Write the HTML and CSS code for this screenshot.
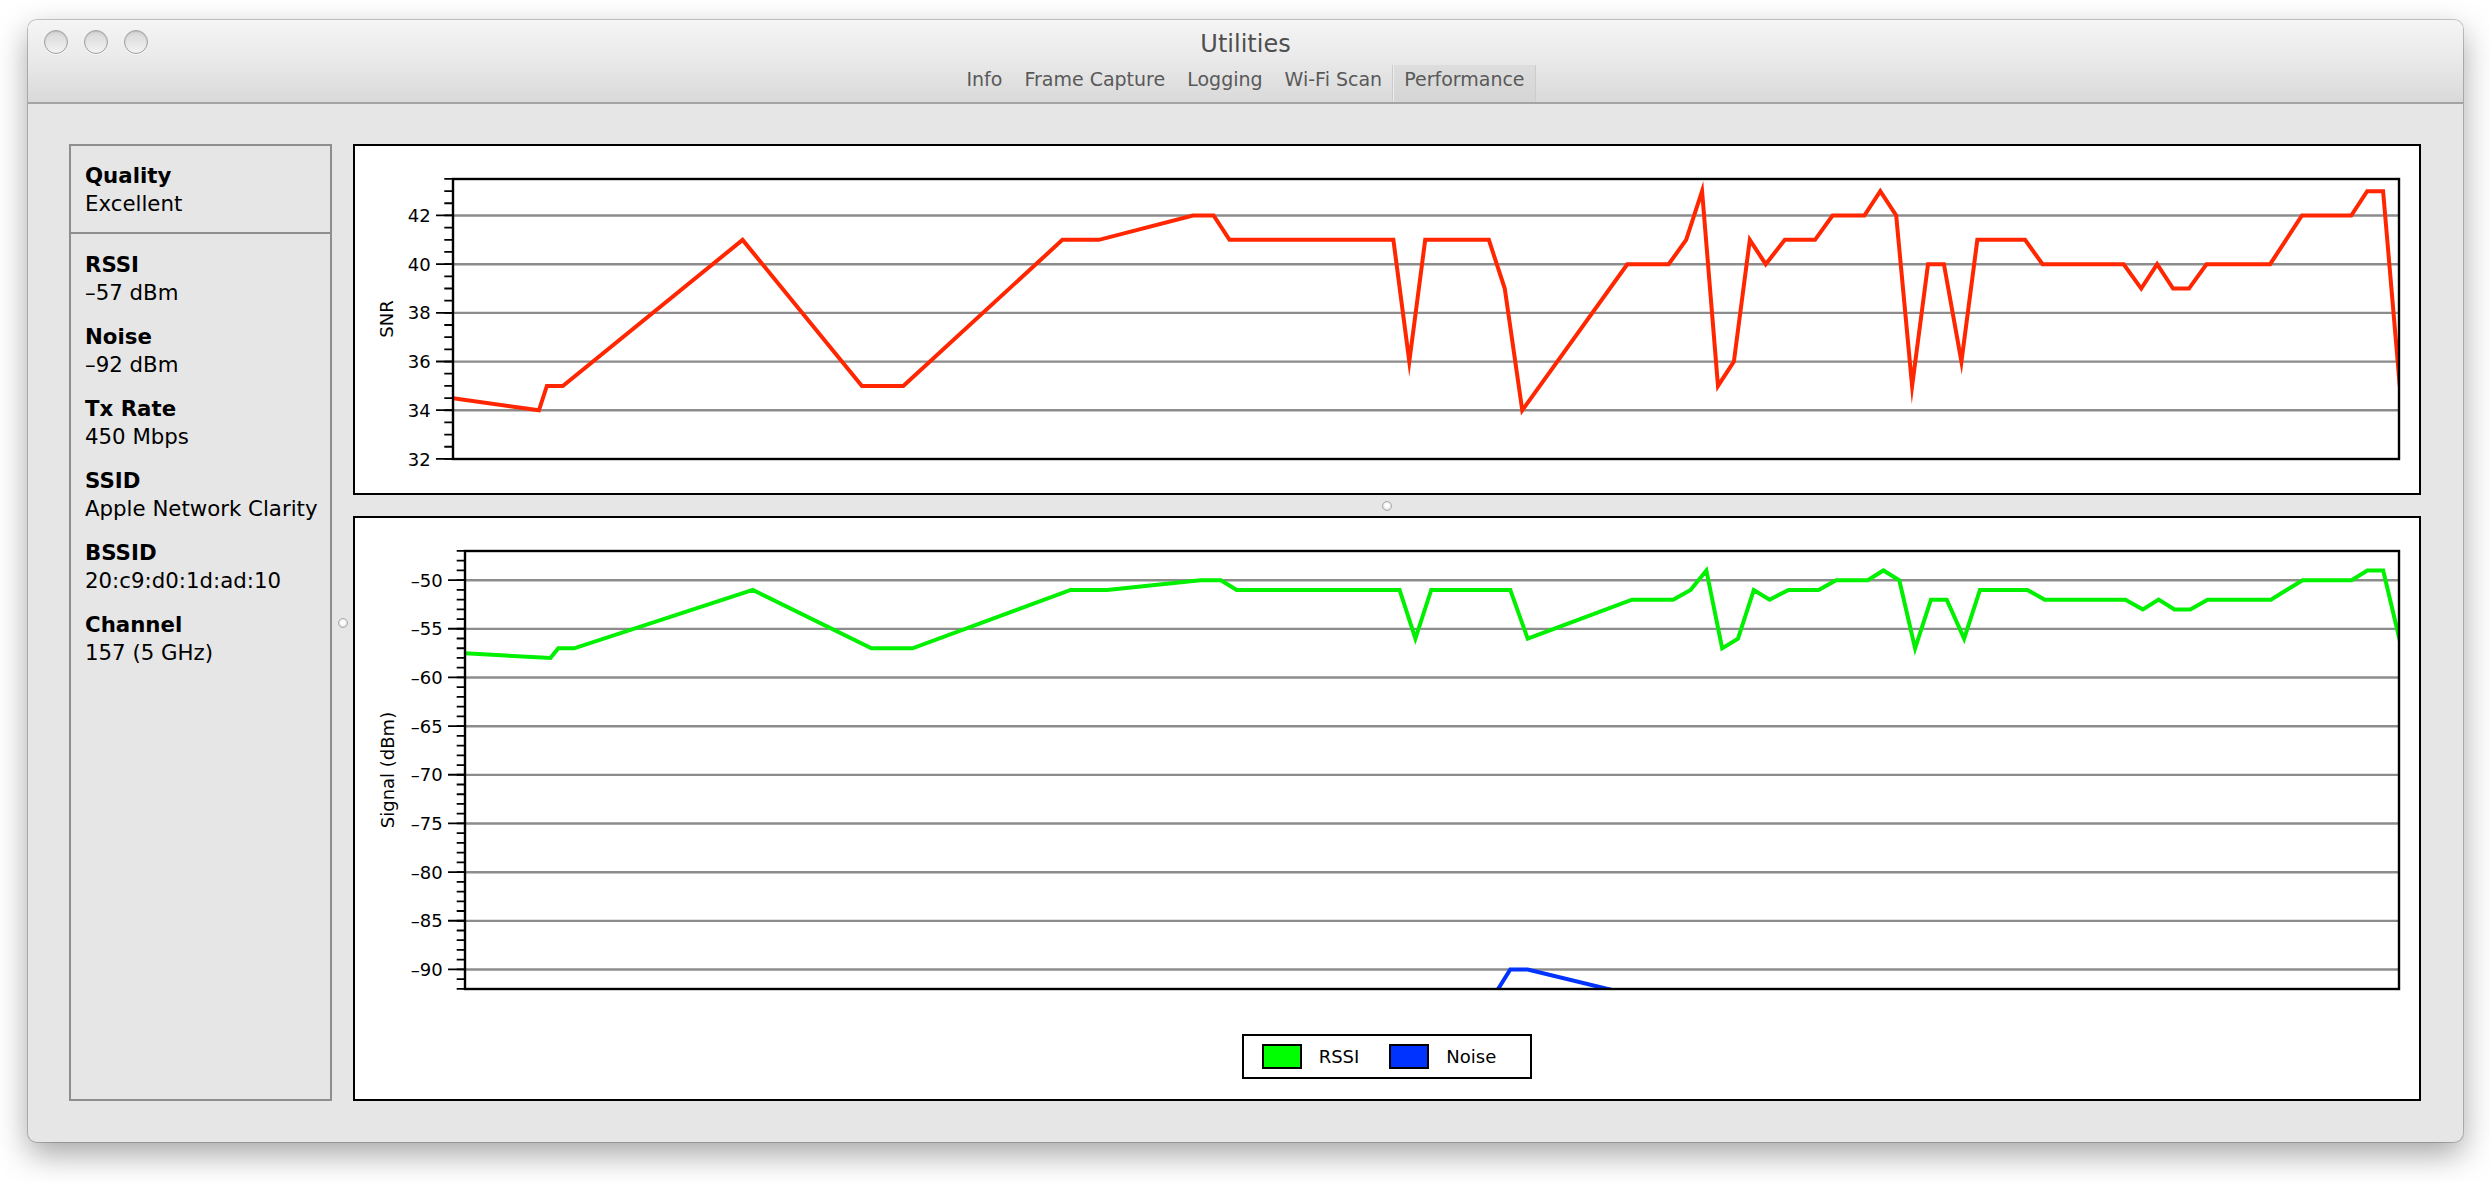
FILE: index.html
```html
<!DOCTYPE html>
<html lang="en">
<head>
<meta charset="utf-8">
<title>Utilities</title>
<link rel="stylesheet" href="styles.css">
</head>
<body>
<div class="window">
  <header class="titlebar">
    <div class="titlerow">
      <div class="lights"><span class="light"></span><span class="light"></span><span class="light"></span></div>
      <div class="title">Utilities</div>
      <div class="titlerow-end"></div>
    </div>
    <nav class="tabs">
      <span class="tab">Info</span>
      <span class="tab">Frame Capture</span>
      <span class="tab">Logging</span>
      <span class="tab">Wi-Fi Scan</span>
      <span class="tab selected">Performance</span>
    </nav>
  </header>
  <main class="content">
    <aside class="panel">
      <div class="panel-head">
        <div class="field-label">Quality</div>
        <div class="field-value">Excellent</div>
      </div>
      <div class="panel-body">
        <div class="field"><div class="field-label">RSSI</div><div class="field-value">–57 dBm</div></div>
        <div class="field"><div class="field-label">Noise</div><div class="field-value">–92 dBm</div></div>
        <div class="field"><div class="field-label">Tx Rate</div><div class="field-value">450 Mbps</div></div>
        <div class="field"><div class="field-label">SSID</div><div class="field-value">Apple Network Clarity</div></div>
        <div class="field"><div class="field-label">BSSID</div><div class="field-value">20:c9:d0:1d:ad:10</div></div>
        <div class="field"><div class="field-label">Channel</div><div class="field-value">157 (5 GHz)</div></div>
      </div>
    </aside>
    <div class="vsplit"><span class="grip"></span></div>
    <section class="charts">
      <div class="chart chart-snr">
        <svg class="canvas" width="2064" height="347" viewBox="0 0 2064 347">
          <g class="grid">
            <line x1="98" x2="2044" y1="264.3" y2="264.3"/>
            <line x1="98" x2="2044" y1="215.6" y2="215.6"/>
            <line x1="98" x2="2044" y1="166.9" y2="166.9"/>
            <line x1="98" x2="2044" y1="118.2" y2="118.2"/>
            <line x1="98" x2="2044" y1="69.5" y2="69.5"/>
          </g>
          <svg x="98" y="33" width="1946" height="280" viewBox="287 -43.5 1223 11.5" preserveAspectRatio="none">
            <polyline class="series series-snr" points="287,-34.5 341,-34 346,-35 356,-35 469,-41 544,-35 570,-35 670,-41 693,-41 752,-42 765,-42 775,-41 878,-41 888,-36 898,-41 938,-41 948,-39 959,-34 1025,-40 1051,-40 1062,-41 1072,-43 1082,-35 1092,-36 1102,-41 1112,-40 1124,-41 1143,-41 1154,-42 1174,-42 1184,-43 1194,-42 1204,-35 1214,-40 1224,-40 1235,-36 1245,-41 1275,-41 1286,-40 1337,-40 1348,-39 1358,-40 1368,-39 1378,-39 1389,-40 1429,-40 1449,-42 1480,-42 1490,-43 1500,-43 1510.5,-35"/>
          </svg>
          <rect class="frame" x="98" y="33" width="1946" height="280"/>
          <line class="tick-minor-snr" x1="93.65" x2="93.65" y1="32" y2="314"/>
          <line class="tick-major-snr" x1="89.5" x2="89.5" y1="68.5" y2="314"/>
          <g class="ytick">
            <text x="75.7" y="313">32</text>
            <text x="75.7" y="264.3">34</text>
            <text x="75.7" y="215.6">36</text>
            <text x="75.7" y="166.9">38</text>
            <text x="75.7" y="118.2">40</text>
            <text x="75.7" y="69.5">42</text>
          </g>
          <text class="ytitle" transform="translate(31.7 173) rotate(-90)">SNR</text>
        </svg>
      </div>
      <div class="hsplit"><span class="grip"></span></div>
      <div class="chart chart-signal">
        <svg class="canvas" width="2064" height="500" viewBox="0 0 2064 500">
          <g class="grid">
            <line x1="110" x2="2044" y1="62.2" y2="62.2"/>
            <line x1="110" x2="2044" y1="110.867" y2="110.867"/>
            <line x1="110" x2="2044" y1="159.533" y2="159.533"/>
            <line x1="110" x2="2044" y1="208.2" y2="208.2"/>
            <line x1="110" x2="2044" y1="256.867" y2="256.867"/>
            <line x1="110" x2="2044" y1="305.533" y2="305.533"/>
            <line x1="110" x2="2044" y1="354.2" y2="354.2"/>
            <line x1="110" x2="2044" y1="402.867" y2="402.867"/>
            <line x1="110" x2="2044" y1="451.533" y2="451.533"/>
          </g>
          <svg x="110" y="33" width="1934" height="438" viewBox="287 47 1223 45" preserveAspectRatio="none">
            <polyline class="series series-noise" points="287,92.6 938,92.6 948,90 959,90 1025,92.6 1512,92.6"/>
            <polyline class="series series-rssi" points="287,57.5 341,58 346,57 356,57 469,51 544,57 570,57 670,51 693,51 752,50 765,50 775,51 878,51 888,56 898,51 938,51 948,51 959,56 1025,52 1051,52 1062,51 1072,49 1082,57 1092,56 1102,51 1112,52 1124,51 1143,51 1154,50 1174,50 1184,49 1194,50 1204,57 1214,52 1224,52 1235,56 1245,51 1275,51 1286,52 1337,52 1348,53 1358,52 1368,53 1378,53 1389,52 1429,52 1449,50 1480,50 1490,49 1500,49 1510.5,56.2"/>
          </svg>
          <rect class="frame" x="110" y="33" width="1934" height="438"/>
          <line class="tick-minor-sig" x1="105.85" x2="105.85" y1="32" y2="472"/>
          <line class="tick-major-sig" x1="101.5" x2="101.5" y1="61.2" y2="453"/>
          <g class="ytick">
            <text x="87.7" y="62.2">–50</text>
            <text x="87.7" y="110.867">–55</text>
            <text x="87.7" y="159.533">–60</text>
            <text x="87.7" y="208.2">–65</text>
            <text x="87.7" y="256.867">–70</text>
            <text x="87.7" y="305.533">–75</text>
            <text x="87.7" y="354.2">–80</text>
            <text x="87.7" y="402.867">–85</text>
            <text x="87.7" y="451.533">–90</text>
          </g>
          <text class="ytitle" transform="translate(32.7 252) rotate(-90)">Signal (dBm)</text>
        </svg>
        <div class="legend">
          <span class="swatch swatch-rssi"></span><span class="legend-label">RSSI</span>
          <span class="swatch swatch-noise"></span><span class="legend-label">Noise</span>
        </div>
      </div>
    </section>
  </main>
</div>
</body>
</html>
```
FILE: styles.css
```css
html, body {
  margin: 0;
  padding: 0;
  background: #ffffff;
}

body {
  width: 2490px;
  height: 1182px;
  overflow: hidden;
  font-family: "DejaVu Sans", "Liberation Sans", sans-serif;
}

.window {
  margin: 20px 0 0 28px;
  width: 2435px;
  height: 1122px;
  background: #e6e6e6;
  border-radius: 9px;
  box-shadow: 0 0 0 1px rgba(0, 0, 0, 0.2), 0 12px 32px rgba(0, 0, 0, 0.36);
  display: flex;
  flex-direction: column;
  overflow: hidden;
}

/* ---------- title bar ---------- */
.titlebar {
  flex: none;
  height: 82px;
  border-bottom: 2px solid #a4a4a4;
  background: linear-gradient(#f5f5f5, #e9e9e9 50%, #d9d9d9);
}

.titlerow {
  display: grid;
  grid-template-columns: 1fr auto 1fr;
  height: 45px;
}

.lights {
  display: flex;
  gap: 16px;
  padding: 10px 0 0 16px;
  align-items: flex-start;
}

.light {
  width: 24px;
  height: 24px;
  box-sizing: border-box;
  border-radius: 50%;
  border: 1px solid #a0a0a0;
  background: linear-gradient(#d6d6d6, #f3f3f3);
  box-shadow: inset 0 1px 2px rgba(0, 0, 0, 0.12), 0 1px 0 rgba(255, 255, 255, 0.6);
}

.title {
  padding-top: 9px;
  font-size: 24px;
  line-height: 30px;
  color: #4f4f4f;
}

.tabs {
  display: flex;
  justify-content: center;
  height: 37px;
}

.tab {
  padding: 3px 11px 0;
  font-size: 19px;
  line-height: 22px;
  color: #595959;
}

.tab.selected {
  background: linear-gradient(#dddddd, #d5d5d5);
  box-shadow: inset 1px 0 0 #ededed, inset -1px 0 0 #cccccc, -1px 0 0 #cacaca;
}

/* ---------- content ---------- */
.content {
  flex: 1;
  min-height: 0;
  display: flex;
  padding: 40px 42px 41px 41px;
}

.panel {
  flex: none;
  width: 263px;
  box-sizing: border-box;
  border: 2px solid #8e8e8e;
  font-size: 21.3px;
  line-height: 28px;
  color: #000;
  white-space: nowrap;
}

.panel-head {
  padding: 15.6px 8px 14.4px 14px;
  border-bottom: 2px solid #8e8e8e;
}

.panel-body {
  padding: 16.6px 8px 16px 14px;
}

.field + .field {
  margin-top: 16px;
}

.field-label {
  font-weight: bold;
}

.vsplit {
  flex: none;
  width: 21px;
  display: flex;
  align-items: center;
  justify-content: center;
}

.hsplit {
  flex: none;
  height: 21px;
  display: flex;
  align-items: center;
  justify-content: center;
}

.grip {
  width: 10px;
  height: 10px;
  box-sizing: border-box;
  border-radius: 50%;
  border: 1px solid #ababab;
  background: radial-gradient(circle at 50% 45%, #ffffff 0 30%, #cfcfcf 85%);
}

.charts {
  flex: 1;
  min-width: 0;
  display: flex;
  flex-direction: column;
}

.chart {
  box-sizing: border-box;
  border: 2px solid #000;
  background: #fff;
}

.chart-snr {
  flex: none;
  height: 351px;
}

.chart-signal {
  flex: 1;
  display: flex;
  flex-direction: column;
  align-items: center;
}

.canvas {
  display: block;
  flex: none;
}

/* ---------- chart drawing ---------- */
.grid line {
  stroke: #8c8c8c;
  stroke-width: 2.4;
}

.frame {
  fill: none;
  stroke: #000;
  stroke-width: 2.4;
}

.tick-minor-snr {
  stroke: #000;
  stroke-width: 8.7;
  stroke-dasharray: 1.8 10.375;
}

.tick-major-snr {
  stroke: #000;
  stroke-width: 17;
  stroke-dasharray: 1.8 46.9;
}

.tick-minor-sig {
  stroke: #000;
  stroke-width: 8.3;
  stroke-dasharray: 1.8 7.933;
}

.tick-major-sig {
  stroke: #000;
  stroke-width: 17;
  stroke-dasharray: 1.8 46.867;
}

.ytick text {
  font-family: "DejaVu Sans", sans-serif;
  font-size: 18px;
  text-anchor: end;
  dominant-baseline: central;
  fill: #000;
}

.ytitle {
  font-family: "DejaVu Sans", sans-serif;
  font-size: 18px;
  text-anchor: middle;
  dominant-baseline: central;
  fill: #000;
}

.series {
  fill: none;
  stroke-width: 4;
  vector-effect: non-scaling-stroke;
  stroke-linejoin: miter;
  stroke-miterlimit: 10;
}

.series-snr {
  stroke: #ff2600;
}

.series-rssi {
  stroke: #00f000;
}

.series-noise {
  stroke: #0033ff;
}

/* ---------- legend ---------- */
.legend {
  flex: none;
  margin-top: 16px;
  height: 45px;
  box-sizing: border-box;
  border: 2px solid #000;
  display: flex;
  align-items: center;
  padding: 0 34px 0 18px;
  font-size: 18px;
  color: #000;
}

.swatch {
  width: 40px;
  height: 25px;
  box-sizing: border-box;
  border: 2px solid #000;
}

.swatch-rssi {
  background: #00ff00;
}

.swatch-noise {
  background: #0033ff;
  margin-left: 30px;
}

.legend-label {
  margin-left: 17px;
}
```
